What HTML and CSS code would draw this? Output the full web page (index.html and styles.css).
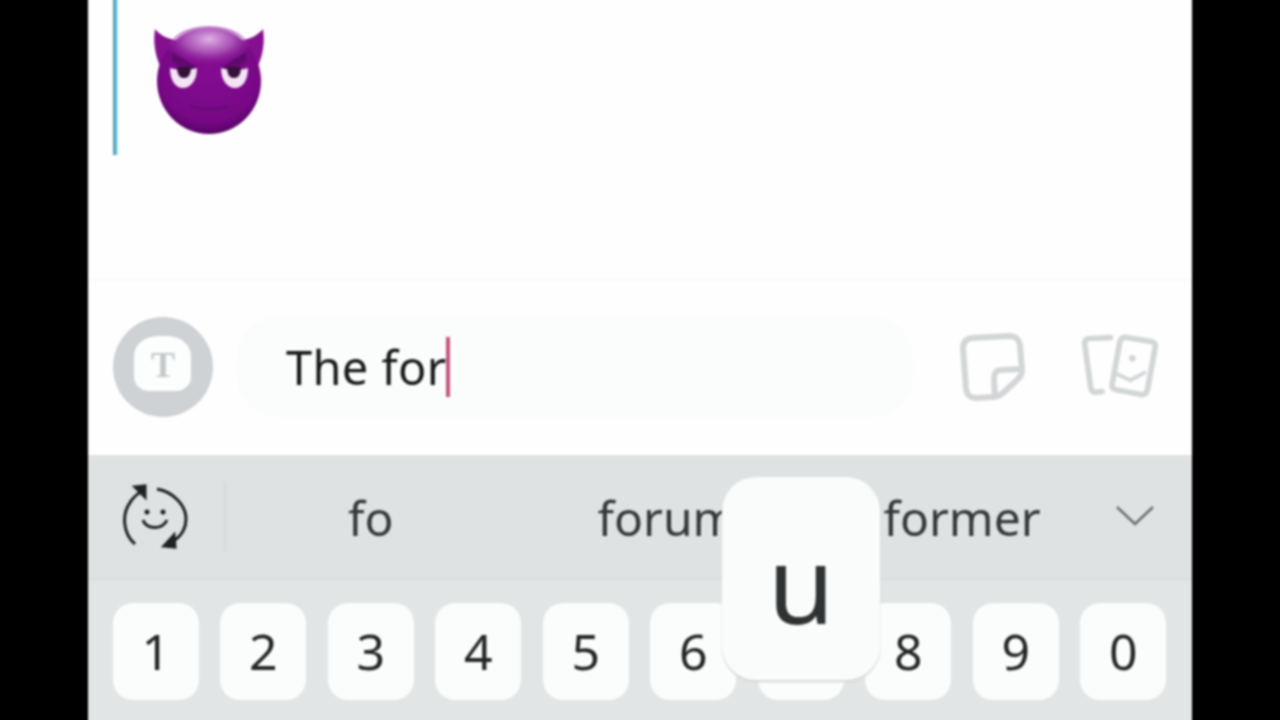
FILE: index.html
```html
<!DOCTYPE html>
<html>
<head>
	<title>Chat keyboard</title>
	<link rel="stylesheet" href="styles.css">
</head>
<body>

<div class="phone">
	<div class="chat">
		<div class="quote-bar"></div>
		<svg class="emoji" viewBox="0 0 114 108">
			<defs>
				<radialGradient id="face" cx="50%" cy="40%" r="62%">
					<stop offset="0" stop-color="#850c92"/>
					<stop offset="0.78" stop-color="#780886"/>
					<stop offset="1" stop-color="#520360"/>
				</radialGradient>
				<radialGradient id="shine" cx="50%" cy="30%" r="60%">
					<stop offset="0" stop-color="#e0b4e6"/>
					<stop offset="0.5" stop-color="#b565c0" stop-opacity="0.8"/>
					<stop offset="1" stop-color="#8f1c9c" stop-opacity="0"/>
				</radialGradient>
			</defs>
			<path d="M3 3C8 9 16 14 30 15L16 54C6 40 0 22 3 3Z" fill="#85108f"/>
			<path d="M111 3C106 9 98 14 84 15L98 54C108 40 114 22 111 3Z" fill="#85108f"/>
			<ellipse cx="57" cy="55" rx="52" ry="53" fill="url(#face)"/>
			<ellipse cx="57" cy="22" rx="40" ry="22" fill="url(#shine)"/>
			<path d="M20 26L46 42L45 48L20 36Z" fill="#4f0a5c" opacity="0.65"/>
			<path d="M94 26L68 42L69 48L94 36Z" fill="#4f0a5c" opacity="0.65"/>
			<path d="M18 42C24 44 38 44 45 42C45 54 39 62 31 62C23 62 18 54 18 42Z" fill="#f4e3f5"/>
			<path d="M69 42C76 44 90 44 96 42C96 54 91 62 83 62C75 62 69 54 69 42Z" fill="#f4e3f5"/>
			<path d="M25 41H39C39 49 36 52 32 52C28 52 25 49 25 41Z" fill="#34103a"/>
			<path d="M75 41H89C89 49 86 52 82 52C78 52 75 49 75 41Z" fill="#34103a"/>
			<path d="M38 80C48 84 66 84 76 80" fill="none" stroke="#650a72" stroke-width="2"/>
		</svg>
	</div>

	<div class="compose">
		<div class="text-btn">
			<div class="text-icon">T</div>
		</div>
		<div class="input"><span class="typed">The for</span><span class="caret"></span></div>
		<svg class="sticker" viewBox="0 0 66 68" fill="none" stroke="#d3d6d7" stroke-width="6" stroke-linejoin="round">
			<path d="M13 5L50 3C57 3 60 6 61 12L63 37C63 42 61 44 58 47L44 60C41 63 38 64 34 64L18 65C11 65 8 62 7 56L4 15C4 9 7 6 13 5Z"/>
			<path d="M36 63L35 45C35 40 38 37 42 37L63 36"/>
		</svg>
		<svg class="cards" viewBox="0 0 80 66" fill="none" stroke="#d3d6d7" stroke-width="6" stroke-linejoin="round" stroke-linecap="round">
			<path d="M30 3L8 4C4 4 2 7 3 11L9 55C10 60 13 62 18 60H21"/>
			<path d="M47 3L72 7C76 8 78 10 77 14L69 58C68 62 66 64 62 63L36 58C32 57 31 55 32 51L40 7C41 4 43 2 47 3Z"/>
			<circle cx="53" cy="25" r="3.5" fill="#d3d6d7" stroke="none"/>
			<path d="M38 42L51 48L66 40" stroke-width="4"/>
		</svg>
	</div>

	<div class="keyboard">
		<div class="suggestions">
			<svg class="emoji-switch" viewBox="0 0 66 66" fill="none" stroke="#1f2223" stroke-width="3">
				<path d="M13 60C1 50 -1 30 9 17C12 13 15 10 19 8"/>
				<path d="M35 5C52 8 64 22 64 35C64 44 59 52 52 57"/>
				<path d="M13 3L23 2L23 13Z" fill="#1f2223"/>
				<path d="M42 62L53 63L52 51Z" fill="#1f2223"/>
				<circle cx="25" cy="28" r="2.5" fill="#1f2223" stroke="none"/>
				<circle cx="41" cy="28" r="2.5" fill="#1f2223" stroke="none"/>
				<path d="M21 36C24 46 41 46 45 36"/>
			</svg>
			<div class="sep"></div>
			<div class="word word-fo">fo</div>
			<div class="word word-forum">forum</div>
			<div class="word word-former">former</div>
			<svg class="chevron" viewBox="0 0 40 24" fill="none" stroke="#6b6f70" stroke-width="2.5">
				<path d="M2 3L20 20L38 3"/>
			</svg>
		</div>
		<div class="digits">
			<div class="key">1</div>
			<div class="key">2</div>
			<div class="key">3</div>
			<div class="key">4</div>
			<div class="key">5</div>
			<div class="key">6</div>
			<div class="key"></div>
			<div class="key">8</div>
			<div class="key">9</div>
			<div class="key">0</div>
		</div>
		<div class="popup">u</div>
	</div>
</div>

</body>
</html>
```

FILE: styles.css
```css
html, body {
	margin: 0;
	height: 720px;
	overflow: hidden;
	background: #000;
}

body {
	font-family: "Noto Sans", sans-serif;
	color: #2f3233;
}

/* 10px past the window top and bottom so the blur does not fade the edges */
.phone {
	width: 1104px;
	height: 740px;
	margin: -10px auto 0;
	background: #fefefe;
	display: flex;
	flex-direction: column;
	filter: blur(0.8px);
}

.chat {
	height: 290px;
	flex: none;
	box-sizing: border-box;
	padding-left: 25px;
	display: flex;
	align-items: flex-start;
	border-bottom: 1px solid #f6f7f7;
}

.quote-bar {
	width: 5px;
	height: 165px;
	background: linear-gradient(to right, #5a9db5 0 50%, #8fe0f5 50%);
}

.emoji {
	width: 114px;
	height: 108px;
	margin: 36px 0 0 34px;
}

.compose {
	height: 175px;
	flex: none;
	box-sizing: border-box;
	padding: 0 34px 0 25px;
	display: flex;
	align-items: center;
}

.text-btn {
	width: 100px;
	height: 100px;
	border-radius: 50%;
	background: #ced2d4;
	display: flex;
	align-items: center;
	justify-content: center;
	margin-top: -2px;
}

.text-icon {
	width: 57px;
	height: 55px;
	margin-top: -6px;
	border-radius: 42% 42% 26% 26% / 36% 36% 26% 26%;
	background: #fcfdfd;
	color: #c4c8ca;
	font-family: "Liberation Serif", serif;
	font-size: 36px;
	font-weight: bold;
	line-height: 58px;
	text-align: center;
}

.input {
	width: 628px;
	height: 100px;
	margin: -2px 0 0 24px;
	padding-left: 49px;
	border-radius: 40px;
	background: #fbfcfc;
	display: flex;
	align-items: center;
}

.typed {
	font-size: 47px;
	letter-spacing: 0.4px;
	color: #17191a;
	white-space: pre;
}

.caret {
	width: 4px;
	height: 60px;
	margin-left: -1px;
	background: #c2557f;
}

.sticker {
	width: 66px;
	height: 68px;
	margin-left: 46px;
	margin-top: -2px;
}

.cards {
	width: 76px;
	height: 64px;
	margin-left: 57px;
	margin-top: -4px;
}

.keyboard {
	position: relative;
	flex: 1;
	background: #e2e5e5;
}

.suggestions {
	height: 125px;
	box-sizing: border-box;
	border-bottom: 2px solid #d9dcdc;
	background: #dfe2e2;
	display: flex;
	align-items: center;
	font-size: 48px;
	color: #34383a;
}

.emoji-switch {
	width: 66px;
	height: 66px;
	margin-left: 34px;
	flex: none;
}

.sep {
	width: 2px;
	height: 70px;
	margin-left: 36px;
	background: #d6d9d9;
	flex: none;
}

.word {
	line-height: 1;
	white-space: pre;
	margin-top: 2px;
}

.word-fo {
	margin-left: 122px;
}

.word-forum {
	margin-left: 204px;
}

.word-former {
	margin-left: 146px;
}

.chevron {
	width: 40px;
	height: 24px;
	margin-left: 74px;
	margin-top: -2px;
	flex: none;
}

.digits {
	padding: 23px 0 0 25px;
	display: flex;
	gap: 21.8px;
}

.key {
	width: 85.7px;
	height: 97px;
	border-radius: 20px;
	background: #fbfcfc;
	font-size: 50px;
	line-height: 97px;
	text-align: center;
	color: #232627;
}

.popup {
	position: absolute;
	left: 634px;
	top: 22px;
	width: 158px;
	height: 203px;
	border-radius: 34px;
	background: #fafbfb;
	box-shadow: 0 2px 2px #d5d8d8;
	font-size: 108px;
	line-height: 212px;
	text-align: center;
	color: #2f3233;
}
```
